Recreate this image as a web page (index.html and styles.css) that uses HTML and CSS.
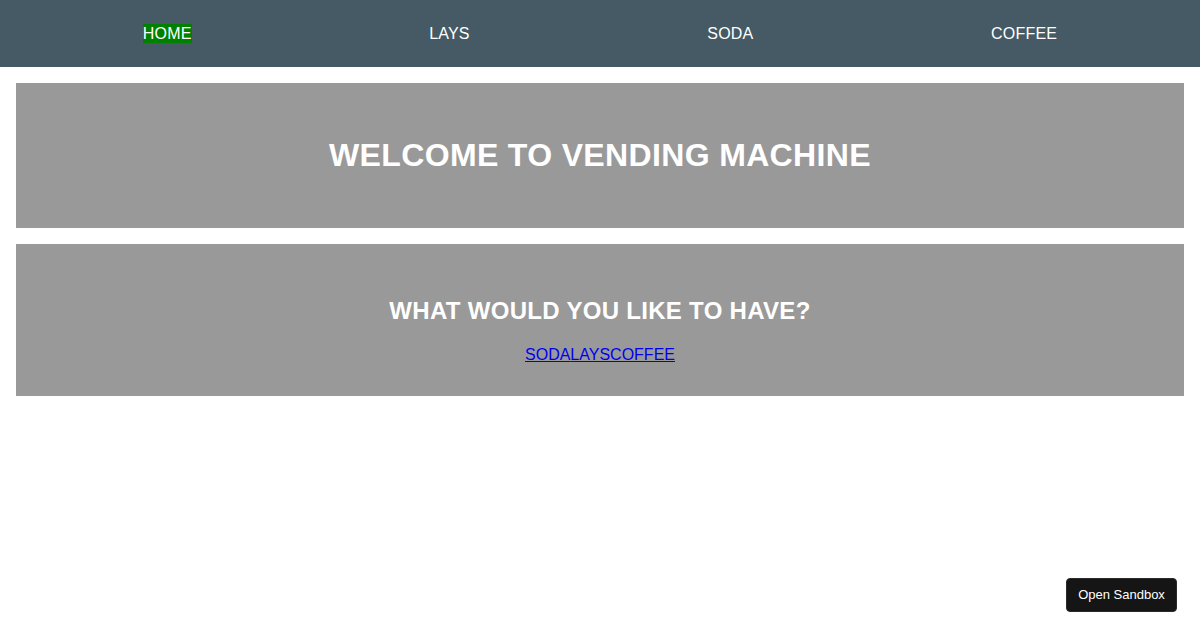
FILE: index.html
```html
<!DOCTYPE html>
<html>
<head>
<meta charset="utf-8">
<title>Vending Machine</title>
<link rel="stylesheet" href="styles.css">
</head>
<body>
<nav class="nav">
  <a class="nav-link active" href="#">HOME</a>
  <a class="nav-link" href="#">LAYS</a>
  <a class="nav-link" href="#">SODA</a>
  <a class="nav-link" href="#">COFFEE</a>
</nav>
<main class="content">
  <section class="panel">
    <h1 class="title">WELCOME TO VENDING MACHINE</h1>
  </section>
  <section class="panel">
    <h2 class="subtitle">WHAT WOULD YOU LIKE TO HAVE?</h2>
    <div class="choices"><a href="#">SODA</a><a href="#">LAYS</a><a href="#">COFFEE</a></div>
  </section>
</main>
<button class="sandbox-btn">Open Sandbox</button>
</body>
</html>
```
FILE: styles.css
```css
html, body {
  margin: 0;
  padding: 0;
  background: #ffffff;
  font-family: "Liberation Sans", Arial, sans-serif;
}
.nav {
  height: 67px;
  background: #455a64;
  display: flex;
  align-items: center;
  justify-content: space-around;
  padding: 0 24px;
  box-sizing: border-box;
}
.nav-link {
  color: #ffffff;
  text-decoration: none;
  font-size: 16px;
  line-height: 19px;
  letter-spacing: 0.2px;
}
.nav-link.active {
  background: #008000;
}
.content {
  padding: 16px;
  display: flex;
  flex-direction: column;
  gap: 16px;
}
.panel {
  background: #999999;
  color: #ffffff;
  text-align: center;
  padding: 33px 32px 32px;
}
.title {
  font-size: 32px;
  font-weight: bold;
  letter-spacing: 0.35px;
  margin: 21.44px 0;
}
.subtitle {
  font-size: 24px;
  font-weight: bold;
  letter-spacing: 0.3px;
  margin: 19.92px 0 20.92px;
}
.choices {
  font-size: 16px;
}
.choices a {
  color: #0000ee;
  text-decoration: underline;
}
.sandbox-btn {
  position: fixed;
  right: 23px;
  bottom: 18px;
  width: 111px;
  height: 34px;
  background: #151515;
  color: #ffffff;
  border: 1px solid #2a2a2a;
  border-radius: 4px;
  font-family: "Liberation Sans", Arial, sans-serif;
  font-size: 13px;
  padding: 0 0 2px;
}
```
